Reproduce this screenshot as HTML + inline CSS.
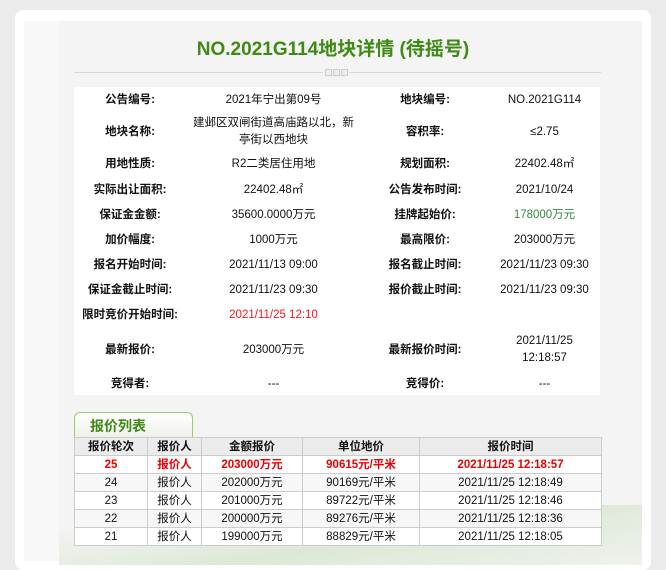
<!DOCTYPE html>
<html><head><meta charset="utf-8"><style>
*{margin:0;padding:0;box-sizing:border-box}
body{width:666px;height:556px;overflow:hidden;background:#ebebeb;font-family:"Liberation Sans","Noto Sans CJK SC",sans-serif;font-size:12px;color:#111;position:relative}
.card{position:absolute;left:15px;top:10px;width:636px;height:560px;background:#fff;border-radius:8px}
.inner{position:absolute;left:24px;top:21px;width:618px;height:540px;background:#f3f4f3}
.strip{position:absolute;left:24px;top:21px;width:35px;height:540px;background:#f7f8f7}
.green{position:absolute;left:59px;top:505px;width:583px;height:60px;background:linear-gradient(170deg,#f3f4f3 15%,#dde8d6 55%,#eef2ec)}
h1{position:absolute;left:24px;width:618px;top:34px;text-align:center;font-size:19px;color:#3f8a14;font-weight:bold}
.line{position:absolute;left:74px;width:527px;top:72px;height:1px;background:#d8d8d8}
.dots{position:absolute;left:323px;top:68px;width:26px;height:9px;background:#f3f4f3;display:flex;gap:1px;justify-content:center}
.dots i{width:7px;height:7px;border:1px solid #ccc;background:#eee;margin-top:1px}
.info{position:absolute;left:74px;top:87px;width:526px;height:308px;background:#fff}
.info table{border-collapse:collapse;width:100%}
.info td{text-align:center;vertical-align:middle;font-size:11.5px;line-height:17px}
.info td.l{font-weight:bold}
.tab{position:absolute;left:74px;top:412px;width:119px;height:25px;border:1px solid #9ccc6a;border-bottom:none;border-radius:6px 6px 0 0;background:linear-gradient(#fff,#eef2ec);color:#3f8a14;font-weight:bold;font-size:14px;padding:3px 0 0 15px}
.q{position:absolute;left:74px;top:437px;border-collapse:collapse;width:528px;background:#fff}
.q td{border:1px solid #ccc;text-align:center;height:18px;font-size:11.5px;padding:0;line-height:16px}
.q tr.h td{background:#ececec;font-weight:bold}
.q tr.r td{color:#e00;font-weight:bold}
.q tr.a td{background:#f7f7f7}
</style></head><body>
<div class="card"></div><div class="inner"></div><div class="strip"></div><div class="green"></div>
<h1>NO.2021G114地块详情 (待摇号)</h1>
<div class="line"></div><div class="dots"><i></i><i></i><i></i></div>
<div class="info"><table>
<tr style="height:26px"><td class="l" style="width:112px">公告编号:</td><td style="width:175px">2021年宁出第09号</td><td class="l" style="width:128px">地块编号:</td><td>NO.2021G114</td></tr>
<tr style="height:38px"><td class="l">地块名称:</td><td>建邺区双闸街道高庙路以北，新<br>亭街以西地块</td><td class="l">容积率:</td><td>≤2.75</td></tr>
<tr style="height:27px"><td class="l">用地性质:</td><td>R2二类居住用地</td><td class="l">规划面积:</td><td>22402.48㎡</td></tr>
<tr style="height:25px"><td class="l">实际出让面积:</td><td>22402.48㎡</td><td class="l">公告发布时间:</td><td>2021/10/24</td></tr>
<tr style="height:25px"><td class="l">保证金金额:</td><td>35600.0000万元</td><td class="l">挂牌起始价:</td><td style="color:#2e8b3a">178000万元</td></tr>
<tr style="height:25px"><td class="l">加价幅度:</td><td>1000万元</td><td class="l">最高限价:</td><td>203000万元</td></tr>
<tr style="height:25px"><td class="l">报名开始时间:</td><td>2021/11/13 09:00</td><td class="l">报名截止时间:</td><td>2021/11/23 09:30</td></tr>
<tr style="height:25px"><td class="l">保证金截止时间:</td><td>2021/11/23 09:30</td><td class="l">报价截止时间:</td><td>2021/11/23 09:30</td></tr>
<tr style="height:25px"><td class="l">限时竞价开始时间:</td><td style="color:#f01818">2021/11/25 12:10</td><td></td><td></td></tr>
<tr style="height:44px"><td class="l">最新报价:</td><td>203000万元</td><td class="l">最新报价时间:</td><td>2021/11/25<br>12:18:57</td></tr>
<tr style="height:24px"><td class="l">竞得者:</td><td>---</td><td class="l">竞得价:</td><td>---</td></tr>
</table></div>
<div class="tab">报价列表</div>
<table class="q">
<tr class="h"><td style="width:73px">报价轮次</td><td style="width:54px">报价人</td><td style="width:101px">金额报价</td><td style="width:117px">单位地价</td><td>报价时间</td></tr>
<tr class="r"><td>25</td><td>报价人</td><td>203000万元</td><td>90615元/平米</td><td>2021/11/25 12:18:57</td></tr>
<tr class="a"><td>24</td><td>报价人</td><td>202000万元</td><td>90169元/平米</td><td>2021/11/25 12:18:49</td></tr>
<tr><td>23</td><td>报价人</td><td>201000万元</td><td>89722元/平米</td><td>2021/11/25 12:18:46</td></tr>
<tr class="a"><td>22</td><td>报价人</td><td>200000万元</td><td>89276元/平米</td><td>2021/11/25 12:18:36</td></tr>
<tr><td>21</td><td>报价人</td><td>199000万元</td><td>88829元/平米</td><td>2021/11/25 12:18:05</td></tr>
</table>
</body></html>
